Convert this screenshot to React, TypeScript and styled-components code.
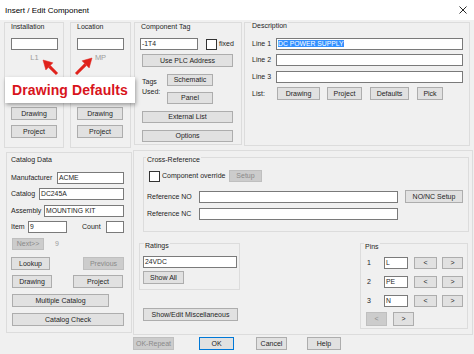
import * as React from 'react';
import styled, { createGlobalStyle } from 'styled-components';

const GlobalStyle = createGlobalStyle`
  html, body { margin: 0; padding: 0; background: #f0f0f0; }
  * { box-sizing: border-box; }
`;

const Window = styled.div`
  position: relative;
  width: 474px;
  height: 354px;
  overflow: hidden;
  background: #f0f0f0;
  font-family: "Liberation Sans", Arial, sans-serif;
  font-size: 7px;
  color: #1e1e1e;
  display: flex;
  flex-direction: column;
`;

const TitleBar = styled.div`
  height: 20px;
  flex-shrink: 0;
  background: #fff;
  display: flex;
  align-items: center;
  justify-content: space-between;
  padding: 0 7px 0 5px;
  font-size: 8px;
  color: #000;
`;

const Body = styled.div`
  display: flex;
  flex-direction: column;
  padding: 2px 0 0 4px;
`;

const Row = styled.div<{ $mt?: number; $ml?: number }>`
  display: flex;
  align-items: center;
  flex-shrink: 0;
  margin-top: ${p => p.$mt ?? 0}px;
  padding-left: ${p => p.$ml ?? 0}px;
`;

const TopRow = styled.div`
  display: flex;
  align-items: flex-start;
  height: 128px;
`;

const MidRow = styled.div`
  display: flex;
  align-items: flex-start;
`;

const Group = styled.div<{ $w: number; $h: number; $mt?: number; $ml?: number }>`
  flex-shrink: 0;
  width: ${p => p.$w}px;
  height: ${p => p.$h}px;
  margin-top: ${p => p.$mt ?? 0}px;
  margin-left: ${p => p.$ml ?? 0}px;
  border: 1px solid #dcdcdc;
  display: flex;
  flex-direction: column;
  align-items: flex-start;
`;

const GroupTitle = styled.div<{ $pl?: number; $mt?: number }>`
  height: 8px;
  line-height: 8px;
  margin-top: ${p => p.$mt ?? 0}px;
  margin-left: ${p => (p.$pl ?? 6) - 1}px;
  padding: 0 1px;
  background: #f0f0f0;
  white-space: nowrap;
`;

const Input = styled.div<{ $w: number; $h?: number; $ml?: number }>`
  flex-shrink: 0;
  width: ${p => p.$w}px;
  height: ${p => p.$h ?? 12}px;
  margin-left: ${p => p.$ml ?? 0}px;
  background: #fff;
  border: 1px solid #7a7a7a;
  font-size: 6.8px;
  line-height: 10px;
  padding-left: 1px;
  white-space: nowrap;
  overflow: hidden;
`;

const Selected = styled.span`
  background: #3390ff;
  color: #fff;
`;

const Btn = styled.button<{ $w: number; $h?: number; $ml?: number; $mt?: number; $default?: boolean }>`
  flex-shrink: 0;
  width: ${p => p.$w}px;
  height: ${p => p.$h ?? 13}px;
  margin: ${p => p.$mt ?? 0}px 0 0 ${p => p.$ml ?? 0}px;
  padding: 0;
  background: #e1e1e1;
  border: 1px solid ${p => (p.$default ? '#0078d7' : '#adadad')};
  font-family: inherit;
  font-size: 7px;
  line-height: 10px;
  color: #1e1e1e;
  white-space: nowrap;

  &:disabled {
    background: #cccccc;
    border-color: #bfbfbf;
    color: #8a8a8a;
  }
`;

const Label = styled.span<{ $w?: number; $ml?: number; $muted?: boolean }>`
  flex-shrink: 0;
  width: ${p => (p.$w ? `${p.$w}px` : 'auto')};
  margin-left: ${p => p.$ml ?? 0}px;
  white-space: nowrap;
  line-height: 10px;
  color: ${p => (p.$muted ? '#9c9c9c' : 'inherit')};
`;

const Hint = styled.div`
  width: 47px;
  margin: 4px 0 0 6px;
  line-height: 8px;
  text-align: center;
  color: #9c9c9c;
  font-size: 7.5px;
`;

const Check = styled.span<{ $ml?: number }>`
  flex-shrink: 0;
  width: 11px;
  height: 11px;
  margin-left: ${p => p.$ml ?? 0}px;
  background: #fff;
  border: 1px solid #333;
`;

const TagsBlock = styled.div`
  display: flex;
  margin: 7px 0 0 7px;
`;

const TagsLabel = styled.div`
  width: 25px;
  padding-top: 3px;
  line-height: 10px;
`;

const StackCol = styled.div<{ $gap: number }>`
  display: flex;
  flex-direction: column;
  gap: ${p => p.$gap}px;
`;

const RightPanel = styled.div`
  width: 340px;
  height: 185px;
  margin-left: 1px;
  border: 1px solid #dcdcdc;
  display: flex;
  flex-direction: column;
`;

const LowerRow = styled.div`
  display: flex;
  align-items: flex-start;
  margin-top: 11px;
`;

const LeftCol = styled.div`
  display: flex;
  flex-direction: column;
  align-items: flex-start;
  margin-left: 5px;
`;

const PinRow = styled.div<{ $mt: number }>`
  display: flex;
  align-items: center;
  margin-top: ${p => p.$mt}px;
  height: 12px;
`;

const Footer = styled.div`
  display: flex;
  margin-top: 2px;
`;

const Callout = styled.div`
  position: absolute;
  left: 5px;
  top: 77px;
  width: 130px;
  height: 26px;
  background: #fff;
  box-shadow: 1px 2px 4px rgba(0, 0, 0, 0.35);
  color: #d8141c;
  font-weight: bold;
  font-size: 14px;
  line-height: 26px;
  text-align: center;
  letter-spacing: 0.1px;
`;

const Arrows = styled.svg`
  position: absolute;
  left: 0;
  top: 0;
  pointer-events: none;
`;

const Arrow = ({ x1, y1, x2, y2 }: { x1: number; y1: number; x2: number; y2: number }) => {
  const a = Math.atan2(y2 - y1, x2 - x1);
  const len = 9;
  const w = 5;
  const bx = x2 - len * Math.cos(a);
  const by = y2 - len * Math.sin(a);
  const px = -Math.sin(a) * w;
  const py = Math.cos(a) * w;
  return (
    <g fill="#e0221c" stroke="#e0221c">
      <line x1={x1} y1={y1} x2={bx} y2={by} strokeWidth={3} />
      <polygon points={`${x2},${y2} ${bx + px},${by + py} ${bx - px},${by - py}`} strokeWidth={0.5} />
    </g>
  );
};

const Installation = ({ title, hint }: { title: string; hint: string }) => (
  <>
    <GroupTitle $pl={6}>{title}</GroupTitle>
    <Row $mt={7} $ml={6}>
      <Input $w={47} />
    </Row>
    <Hint>{hint}</Hint>
    <Btn $w={46} $ml={6} $mt={45}>Drawing</Btn>
    <Btn $w={46} $ml={6} $mt={5}>Project</Btn>
  </>
);

const PinLine = ({ n, v, mt }: { n: string; v: string; mt: number }) => (
  <PinRow $mt={mt}>
    <Label $w={17} $ml={6}>{n}</Label>
    <Input $w={24}>{v}</Input>
    <Btn $w={23} $h={12} $ml={6}>&lt;</Btn>
    <Btn $w={21} $h={12} $ml={5}>&gt;</Btn>
  </PinRow>
);

export default function App() {
  return (
    <Window>
      <GlobalStyle />
      <TitleBar>
        <span>Insert / Edit Component</span>
        <svg width="8" height="8" viewBox="0 0 8 8">
          <path d="M0.5 0.5 L7.5 7.5 M7.5 0.5 L0.5 7.5" stroke="#111" strokeWidth="0.9" />
        </svg>
      </TitleBar>
      <Body>
        <TopRow>
          <Group $w={60} $h={126}>
            <Installation title="Installation" hint="L1" />
          </Group>
          <Group $w={61} $h={126} $ml={6}>
            <Installation title="Location" hint="MP" />
          </Group>
          <Group $w={108} $h={123} $ml={3}>
            <GroupTitle $pl={6}>Component Tag</GroupTitle>
            <Row $mt={7} $ml={5}>
              <Input $w={58}>-1T4</Input>
              <Check $ml={8} />
              <Label $ml={2}>fixed</Label>
            </Row>
            <Btn $w={91} $ml={7} $mt={4}>Use PLC Address</Btn>
            <TagsBlock>
              <TagsLabel>
                Tags
                <br />
                Used:
              </TagsLabel>
              <StackCol $gap={6}>
                <Btn $w={46} $h={12}>Schematic</Btn>
                <Btn $w={46} $h={12}>Panel</Btn>
              </StackCol>
            </TagsBlock>
            <Btn $w={91} $h={12} $ml={7} $mt={7}>External List</Btn>
            <Btn $w={91} $h={12} $ml={7} $mt={7}>Options</Btn>
          </Group>
          <Group $w={226} $h={124} $ml={2}>
            <GroupTitle $pl={7} $mt={-1}>Description</GroupTitle>
            <Row $mt={8} $ml={7}>
              <Label $w={24}>Line 1</Label>
              <Input $w={187}>
                <Selected>DC POWER SUPPLY</Selected>
              </Input>
            </Row>
            <Row $mt={4} $ml={7}>
              <Label $w={24}>Line 2</Label>
              <Input $w={187} />
            </Row>
            <Row $mt={5} $ml={7}>
              <Label $w={24}>Line 3</Label>
              <Input $w={187} />
            </Row>
            <Row $mt={4} $ml={7}>
              <Label $w={25}>List:</Label>
              <Btn $w={43}>Drawing</Btn>
              <Btn $w={35} $ml={7}>Project</Btn>
              <Btn $w={39} $ml={8}>Defaults</Btn>
              <Btn $w={26} $ml={8}>Pick</Btn>
            </Row>
          </Group>
        </TopRow>

        <MidRow>
          <Group $w={126} $h={181} $mt={2} $ml={2}>
            <GroupTitle $pl={4} $mt={3}>Catalog Data</GroupTitle>
            <Row $mt={8} $ml={4}>
              <Label $w={46}>Manufacturer</Label>
              <Input $w={67}>ACME</Input>
            </Row>
            <Row $mt={4} $ml={4}>
              <Label $w={28}>Catalog</Label>
              <Input $w={85}>DC245A</Input>
            </Row>
            <Row $mt={5} $ml={4}>
              <Label $w={33}>Assembly</Label>
              <Input $w={80}>MOUNTING KIT</Input>
            </Row>
            <Row $mt={4} $ml={4}>
              <Label $w={17}>Item</Label>
              <Input $w={39}>9</Input>
              <Label $w={24} $ml={15}>Count</Label>
              <Input $w={18} />
            </Row>
            <Row $mt={5} $ml={5}>
              <Btn $w={32} $h={12} disabled>Next&gt;&gt;</Btn>
              <Label $ml={11} $muted>9</Label>
            </Row>
            <Row $mt={7} $ml={4}>
              <Btn $w={39}>Lookup</Btn>
              <Btn $w={41} $ml={33} disabled>Previous</Btn>
            </Row>
            <Row $mt={5} $ml={5}>
              <Btn $w={40}>Drawing</Btn>
              <Btn $w={50} $ml={21}>Project</Btn>
            </Row>
            <Btn $w={97} $ml={5} $mt={6}>Multiple Catalog</Btn>
            <Btn $w={112} $ml={5} $mt={6}>Catalog Check</Btn>
          </Group>

          <RightPanel>
            <Group $w={326} $h={75} $mt={6} $ml={9}>
              <GroupTitle $pl={3} $mt={-2}>Cross-Reference</GroupTitle>
              <Row $mt={6} $ml={5}>
                <Check />
                <Label $w={67} $ml={2}>Component override</Label>
                <Btn $w={33} $h={12} disabled>Setup</Btn>
              </Row>
              <Row $mt={8} $ml={3}>
                <Label $w={52}>Reference NO</Label>
                <Input $w={199} />
                <Btn $w={58} $ml={7}>NO/NC Setup</Btn>
              </Row>
              <Row $mt={5} $ml={3}>
                <Label $w={52}>Reference NC</Label>
                <Input $w={199} />
              </Row>
            </Group>

            <LowerRow>
              <LeftCol>
                <Group $w={101} $h={47}>
                  <GroupTitle $pl={5} $mt={-2}>Ratings</GroupTitle>
                  <Row $mt={6} $ml={3}>
                    <Input $w={94}>24VDC</Input>
                  </Row>
                  <Btn $w={41} $ml={3} $mt={3}>Show All</Btn>
                </Group>
                <Btn $w={95} $ml={4} $mt={18}>Show/Edit Miscellaneous</Btn>
              </LeftCol>
              <Group $w={108} $h={86} $ml={120}>
                <GroupTitle $pl={4} $mt={-1}>Pins</GroupTitle>
                <PinLine n="1" v="L" mt={6} />
                <PinLine n="2" v="PE" mt={7} />
                <PinLine n="3" v="N" mt={7} />
                <Row $mt={5} $ml={5}>
                  <Btn $w={21} $h={14} disabled>&lt;</Btn>
                  <Btn $w={21} $h={14} $ml={6}>&gt;</Btn>
                </Row>
              </Group>
            </LowerRow>
          </RightPanel>
        </MidRow>

        <Footer>
          <Btn $w={41} $ml={129} disabled>OK-Repeat</Btn>
          <Btn $w={35} $ml={25} $default>OK</Btn>
          <Btn $w={31} $ml={22}>Cancel</Btn>
          <Btn $w={34} $ml={20}>Help</Btn>
        </Footer>
      </Body>

      <Callout>Drawing Defaults</Callout>
      <Arrows width="474" height="354">
        <Arrow x1={57} y1={74} x2={43} y2={60} />
        <Arrow x1={76} y1={74} x2={92} y2={58} />
      </Arrows>
    </Window>
  );
}
